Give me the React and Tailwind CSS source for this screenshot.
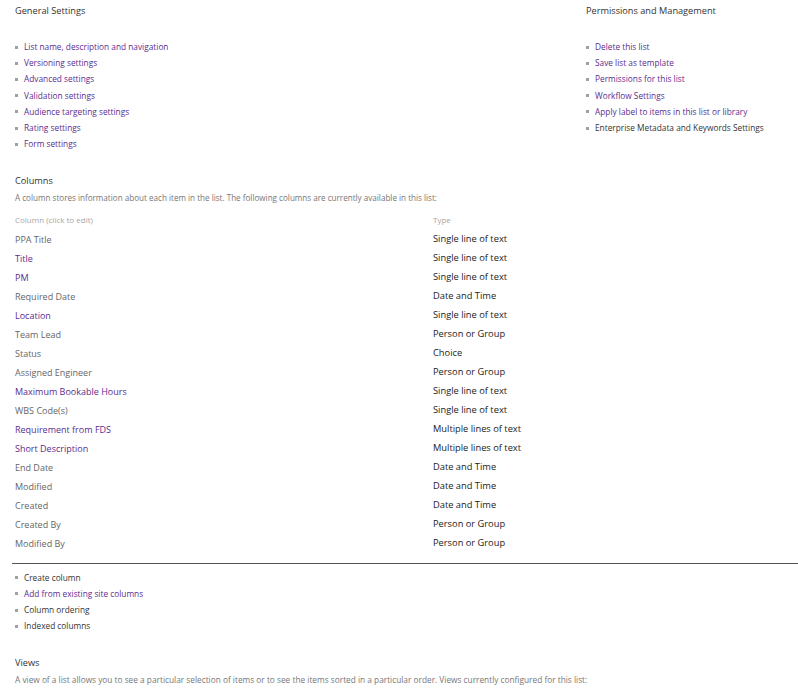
import React from "react";

const general = [
    { label: "List name, description and navigation", link: true },
    { label: "Versioning settings", link: true },
    { label: "Advanced settings", link: true },
    { label: "Validation settings", link: true },
    { label: "Audience targeting settings", link: true },
    { label: "Rating settings", link: true },
    { label: "Form settings", link: true },
];

const permissions = [
    { label: "Delete this list", link: true },
    { label: "Save list as template", link: true },
    { label: "Permissions for this list", link: true },
    { label: "Workflow Settings", link: true },
    { label: "Apply label to items in this list or library", link: true },
    { label: "Enterprise Metadata and Keywords Settings", link: false },
];

const columns = [
    { name: "PPA Title", type: "Single line of text", link: false },
    { name: "Title", type: "Single line of text", link: true },
    { name: "PM", type: "Single line of text", link: true },
    { name: "Required Date", type: "Date and Time", link: false },
    { name: "Location", type: "Single line of text", link: true },
    { name: "Team Lead", type: "Person or Group", link: false },
    { name: "Status", type: "Choice", link: false },
    { name: "Assigned Engineer", type: "Person or Group", link: false },
    { name: "Maximum Bookable Hours", type: "Single line of text", link: true },
    { name: "WBS Code(s)", type: "Single line of text", link: false },
    { name: "Requirement from FDS", type: "Multiple lines of text", link: true },
    { name: "Short Description", type: "Multiple lines of text", link: true },
    { name: "End Date", type: "Date and Time", link: false },
    { name: "Modified", type: "Date and Time", link: false },
    { name: "Created", type: "Date and Time", link: false },
    { name: "Created By", type: "Person or Group", link: false },
    { name: "Modified By", type: "Person or Group", link: false },
];

const columnActions = [
    { label: "Create column", link: false },
    { label: "Add from existing site columns", link: true },
    { label: "Column ordering", link: false },
    { label: "Indexed columns", link: false },
];

function BulletList({ items }) {
    return (
        <ul className="flex flex-col text-[8.3px]">
            {items.map((item, i) => (
                <li key={i} className="flex items-center h-[16.2px]">
                    <span className="w-[3px] h-[3px] bg-[#a0a0a0] mr-[6px] shrink-0"></span>
                    <span className={item.link ? "text-[#5b2c8f]" : "text-[#333]"}>{item.label}</span>
                </li>
            ))}
        </ul>
    );
}

export default function App() {
    return (
        <div className="bg-white w-[798px] h-[695px] overflow-hidden text-[9px] text-[#333] leading-none"
            style={{ fontFamily: "'Open Sans', 'Noto Sans', sans-serif" }}>
            <div className="flex pt-[6px]">
                <div className="w-[586px] pl-[15px]">
                    <h2 className="text-[9.2px] text-[#333] h-[10px]">General Settings</h2>
                    <div className="mt-[23px]">
                        <BulletList items={general} />
                    </div>
                </div>
                <div>
                    <h2 className="text-[9.2px] text-[#333] h-[10px]">Permissions and Management</h2>
                    <div className="mt-[23px]">
                        <BulletList items={permissions} />
                    </div>
                </div>
            </div>

            <div className="pl-[15px] mt-[24px]">
                <h2 className="text-[9.2px] text-[#333]">Columns</h2>
                <p className="mt-[8px] text-[8.1px] text-[#777]">A column stores information about each item in the list. The following columns are currently available in this list:</p>
                <div className="mt-[14px] grid grid-cols-[418px_1fr] text-[#a6a6a6] text-[8px] h-[11px]">
                    <span>Column (click to edit)</span>
                    <span>Type</span>
                </div>
                <div className="mt-[3px]">
                    {columns.map((c, i) => (
                        <div key={i} className="grid grid-cols-[418px_1fr] items-center h-[19px]">
                            <span className={c.link ? "text-[#5b2c8f]" : "text-[#666]"}>{c.name}</span>
                            <span className="text-[#222] text-[9.3px]">{c.type}</span>
                        </div>
                    ))}
                </div>
            </div>

            <div className="ml-[12px] mt-[10px] border-t border-[#555]"></div>

            <div className="pl-[15px] mt-[6px]">
                <BulletList items={columnActions} />
            </div>

            <div className="pl-[15px] mt-[24px]">
                <h2 className="text-[9.2px] text-[#333]">Views</h2>
                <p className="mt-[8px] text-[8.3px] text-[#777]">A view of a list allows you to see a particular selection of items or to see the items sorted in a particular order. Views currently configured for this list:</p>
            </div>
        </div>
    );
}
